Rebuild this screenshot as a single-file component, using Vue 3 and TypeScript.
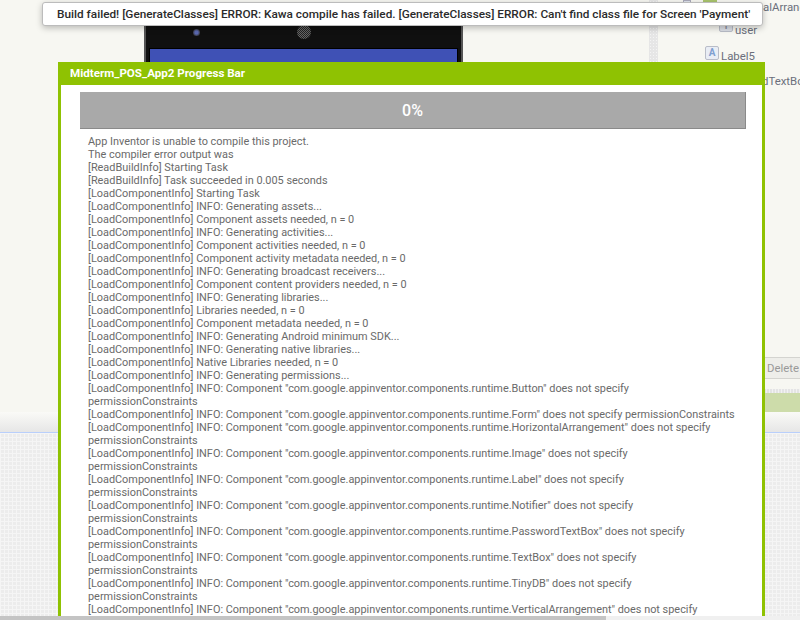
<script setup lang="ts">
const permission = (name: string): string =>
  `[LoadComponentInfo] INFO: Component "com.google.appinventor.components.runtime.${name}" does not specify permissionConstraints`

const logLines: string[] = [
  'App Inventor is unable to compile this project.',
  'The compiler error output was',
  '[ReadBuildInfo] Starting Task',
  '[ReadBuildInfo] Task succeeded in 0.005 seconds',
  '[LoadComponentInfo] Starting Task',
  '[LoadComponentInfo] INFO: Generating assets...',
  '[LoadComponentInfo] Component assets needed, n = 0',
  '[LoadComponentInfo] INFO: Generating activities...',
  '[LoadComponentInfo] Component activities needed, n = 0',
  '[LoadComponentInfo] Component activity metadata needed, n = 0',
  '[LoadComponentInfo] INFO: Generating broadcast receivers...',
  '[LoadComponentInfo] Component content providers needed, n = 0',
  '[LoadComponentInfo] INFO: Generating libraries...',
  '[LoadComponentInfo] Libraries needed, n = 0',
  '[LoadComponentInfo] Component metadata needed, n = 0',
  '[LoadComponentInfo] INFO: Generating Android minimum SDK...',
  '[LoadComponentInfo] INFO: Generating native libraries...',
  '[LoadComponentInfo] Native Libraries needed, n = 0',
  '[LoadComponentInfo] INFO: Generating permissions...',
  ...['Button', 'Form', 'HorizontalArrangement', 'Image', 'Label', 'Notifier', 'PasswordTextBox', 'TextBox', 'TinyDB', 'VerticalArrangement'].map(permission),
]
</script>

<template>
  <div class="page">
    <div class="stage">
      <div class="designer">
        <div class="phone">
          <div class="phone-top">
            <span class="camera"></span>
            <span class="speaker"></span>
          </div>
          <div class="screen"></div>
        </div>
        <div class="splitter"></div>
        <div class="panel">
          <div class="tree">
            <div class="tree-row row-arr">
              <span class="mini mini-a"></span>
              <span class="mini mini-b"></span>
              <span class="tree-text">alArrangement</span>
            </div>
            <div class="tree-row row-user">
              <span class="ico ico-text">I</span>
              <span class="tree-text">user</span>
            </div>
            <div class="tree-row row-label">
              <span class="ico ico-label">A</span>
              <span class="tree-text">Label5</span>
            </div>
            <div class="tree-row row-pass">
              <span class="tree-text">dTextBox</span>
            </div>
          </div>
          <div class="actions">
            <button class="delete" type="button">Delete</button>
          </div>
        </div>
      </div>
      <div class="footer-band">
        <div class="band-strip"></div>
        <div class="band-green"></div>
      </div>
      <div class="gradient"></div>
      <div class="pattern"></div>
    </div>
    <div class="scrollbar"><div class="thumb"></div></div>

    <div class="toast">Build failed! [GenerateClasses] ERROR: Kawa compile has failed. [GenerateClasses] ERROR: Can't find class file for Screen 'Payment'</div>

    <section class="dialog">
      <header class="dialog-title">Midterm_POS_App2 Progress Bar</header>
      <div class="dialog-body">
        <div class="progress">0%</div>
        <div class="log">
          <div v-for="(line, i) in logLines" :key="i">{{ line }}</div>
        </div>
      </div>
    </section>
  </div>
</template>

<style scoped>
.page {
  position: relative;
  width: 800px;
  height: 620px;
  overflow: hidden;
  display: flex;
  flex-direction: column;
  background: #f7f7f2;
  font-family: Roboto, "Liberation Sans", sans-serif;
}
.stage {
  flex: 1;
  min-height: 0;
  display: flex;
  flex-direction: column;
}
.designer {
  height: 389px;
  display: flex;
  align-items: flex-start;
  padding-left: 144px;
}
.phone {
  width: 319px;
  height: 120px;
  margin-top: 10px;
  box-sizing: border-box;
  background: #101010;
  border-left: 2px solid #555;
  border-right: 2px solid #555;
  padding: 0 3px;
}
.phone-top {
  height: 38px;
  display: flex;
  align-items: flex-start;
  padding-left: 44px;
  box-sizing: border-box;
}
.camera {
  width: 7px;
  height: 7px;
  margin-top: 19px;
  border-radius: 50%;
  background: radial-gradient(circle, #5a68b0 0 30%, #3a3a44 70%);
}
.speaker {
  width: 14px;
  height: 14px;
  margin: 15px 0 0 97px;
  border-radius: 50%;
  background: repeating-conic-gradient(#666 0 25%, #222 0 50%) 0 0 / 2px 2px;
}
.screen {
  height: 80px;
  background: #3f51b5;
  border: 1px solid #000;
}
.splitter {
  width: 9px;
  height: 100px;
  margin-left: 186px;
  background-color: #e6e6e6;
  background-image: radial-gradient(#f4f4f4 40%, transparent 45%);
  background-size: 3px 3px;
}
.panel {
  flex: 1;
  min-width: 0;
  height: 389px;
  overflow: hidden;
  display: flex;
  flex-direction: column;
  justify-content: space-between;
  color: #6b6f7c;
  font-size: 11.4px;
}
.tree {
  display: flex;
  flex-direction: column;
}
.tree-row {
  height: 25px;
  display: flex;
  align-items: center;
  gap: 2px;
  white-space: nowrap;
}
.tree-text {
  flex-shrink: 0;
}
.row-arr {
  height: 14px;
  padding-left: 25px;
  align-items: flex-start;
  gap: 3px;
}
.row-user {
  height: 16px;
  padding-left: 61px;
  margin-top: 8px;
}
.row-label {
  padding-left: 47px;
  margin-top: 5px;
}
.row-pass {
  padding-left: 104px;
}
.mini {
  flex-shrink: 0;
  width: 8px;
  height: 3px;
  background: #dfe4ee;
  border: 1px solid #aab;
  box-sizing: border-box;
}
.mini-b {
  width: 14px;
  margin-left: 9px;
  background: #a9c46c;
  border-color: #a9c46c;
}
.row-arr .tree-text {
  margin-left: 43px;
}
.ico {
  flex-shrink: 0;
  width: 14px;
  box-sizing: border-box;
  border: 1px solid #b9bdc8;
  border-radius: 2px;
  text-align: center;
  font-weight: 700;
}
.ico-text {
  height: 11px;
  margin-bottom: 7px;
  background: #dcdfe6;
  color: #8a8f9c;
  font-size: 9px;
  line-height: 9px;
}
.ico-label {
  height: 14px;
  margin-bottom: 5px;
  background: #e9edf5;
  color: #7f9fd0;
  font-size: 10px;
  line-height: 12px;
}
.actions {
  padding: 0 0 10px 107px;
}
.delete {
  display: block;
  height: 22px;
  width: 60px;
  padding: 0 0 0 2px;
  text-align: left;
  border: solid #d4d4d0;
  border-width: 1px 0;
  background: #eeeeea;
  color: #999;
  font: 11.4px Roboto, "Liberation Sans", sans-serif;
}
.footer-band {
  height: 23px;
  padding-left: 658px;
  box-sizing: border-box;
  display: flex;
  flex-direction: column;
}
.band-strip {
  height: 4px;
  background-color: #e4e4e4;
  background-image: linear-gradient(90deg, #f2f2f2 1px, transparent 1px);
  background-size: 3px 3px;
}
.band-green {
  flex: 1;
  background: #cddcaa;
}
.gradient {
  height: 20px;
  background: linear-gradient(#fafaf7, #e6e6e6);
  border-bottom: 1px solid #b9cffb;
}
.pattern {
  flex: 1;
  background-color: #ececec;
  background-image:
    linear-gradient(#f5f5f5 1px, transparent 1px),
    linear-gradient(90deg, #f5f5f5 1px, transparent 1px);
  background-size: 4px 4px;
}
.scrollbar {
  height: 4px;
  background: #f0f0f0;
}
.thumb {
  width: 606px;
  height: 100%;
  background: #c4c4c4;
}
.toast {
  position: absolute;
  left: 42px;
  top: 2px;
  width: 721px;
  height: 24px;
  box-sizing: border-box;
  padding-left: 14px;
  background: #fff;
  border: 1px solid #bcbcbc;
  border-radius: 3px;
  box-shadow: 0 2px 6px rgba(0, 0, 0, 0.25);
  color: #2b2b2b;
  font-size: 11.8px;
  font-weight: 500;
  line-height: 23px;
  white-space: nowrap;
}
.dialog {
  position: absolute;
  left: 58px;
  top: 62px;
  width: 707px;
  height: 554px;
  box-sizing: border-box;
  border: solid #8fc202;
  border-width: 0 3px;
  background: #fff;
  overflow: hidden;
}
.dialog-title {
  height: 23px;
  margin: 0 -3px;
  padding-left: 12px;
  background: #8fc202;
  color: #fff;
  font-size: 11.6px;
  font-weight: 700;
  line-height: 22px;
}
.dialog-body {
  padding: 7px 16px 0 19px;
}
.progress {
  height: 37px;
  width: 666px;
  box-sizing: border-box;
  background: #a9a9a9;
  border-right: 1px solid #8a8a8a;
  border-bottom: 1px solid #8a8a8a;
  color: #fff;
  font-size: 16px;
  font-weight: 500;
  line-height: 37px;
  text-align: center;
}
.log {
  width: 656px;
  box-sizing: border-box;
  padding: 6px 0 0 8px;
  color: #6a6a6a;
  font-size: 10.9px;
  line-height: 13px;
}
</style>
